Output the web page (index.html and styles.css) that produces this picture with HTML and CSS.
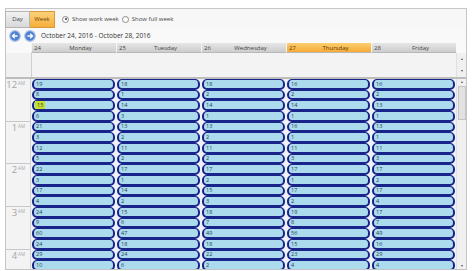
FILE: index.html
```html
<!DOCTYPE html>
<html lang='en'>
<head>
	<meta charset='UTF-8'>
	<title>Scheduler - Week</title>
	<link rel="stylesheet" href="styles.css">
</head>
<body>
	<div class='scheduler'>
		<div class='toolbar'>
			<div class='views'>
				<span class='view'>Day</span>
				<span class='view active'>Week</span>
			</div>
			<span class='radio'><span class='dot checked'></span>Show work week</span>
			<span class='radio'><span class='dot'></span>Show full week</span>
		</div>

		<div class='nav'>
			<svg class='arrow' width='12' height='12' viewBox='0 0 12 12'>
				<circle cx='6' cy='6' r='5.3' fill='#4f7fcf' stroke='#a9c3ea' stroke-width='1.2'/>
				<path d='M8.6 6H3.6M5.8 3.6L3.4 6l2.4 2.4' fill='none' stroke='#fff' stroke-width='1.3'/>
			</svg>
			<svg class='arrow' width='12' height='12' viewBox='0 0 12 12'>
				<circle cx='6' cy='6' r='5.3' fill='#4f7fcf' stroke='#a9c3ea' stroke-width='1.2'/>
				<path d='M3.4 6h5M6.2 3.6L8.6 6 6.2 8.4' fill='none' stroke='#fff' stroke-width='1.3'/>
			</svg>
			<span class='range'>October 24, 2016 - October 28, 2016</span>
		</div>

		<div class='head'>
			<div class='gutter'></div>
			<div class='days'>
				<div class='day'><span class='num'>24</span><span class='name'>Monday</span></div>
				<div class='day'><span class='num'>25</span><span class='name'>Tuesday</span></div>
				<div class='day'><span class='num'>26</span><span class='name'>Wednesday</span></div>
				<div class='day today'><span class='num'>27</span><span class='name'>Thursday</span></div>
				<div class='day'><span class='num'>28</span><span class='name'>Friday</span></div>
			</div>
			<div class='sb-gap'></div>
		</div>

		<div class='allday'>
			<div class='gutter'></div>
			<div class='allday-cells'></div>
			<div class='scrollbar mini'>
				<span class='tri up'></span>
				<span class='tri down'></span>
			</div>
		</div>

		<div class='body'>
			<div class='times'>
				<div class='hour'><span class='h'>12</span><span class='ampm'>AM</span></div>
				<div class='hour'><span class='h'>1</span><span class='ampm'>AM</span></div>
				<div class='hour'><span class='h'>2</span><span class='ampm'>AM</span></div>
				<div class='hour'><span class='h'>3</span><span class='ampm'>AM</span></div>
				<div class='hour'><span class='h'>4</span><span class='ampm'>AM</span></div>
			</div>
			<div class='cols'>
				<div class='col'>
					<div class='appt'>19</div><div class='appt'>8</div><div class='appt'><span class='mark'>15</span></div><div class='appt'>6</div>
					<div class='appt'>21</div><div class='appt'>3</div><div class='appt'>12</div><div class='appt'>5</div>
					<div class='appt'>22</div><div class='appt'>3</div><div class='appt'>17</div><div class='appt'>4</div>
					<div class='appt'>24</div><div class='appt'>9</div><div class='appt'>60</div><div class='appt'>24</div>
					<div class='appt'>29</div><div class='appt'>10</div>
				</div>
				<div class='col'>
					<div class='appt'>18</div><div class='appt'>1</div><div class='appt'>14</div><div class='appt'>3</div>
					<div class='appt'>13</div><div class='appt'>2</div><div class='appt'>11</div><div class='appt'>2</div>
					<div class='appt'>17</div><div class='appt'>1</div><div class='appt'>14</div><div class='appt'>2</div>
					<div class='appt'>15</div><div class='appt'>6</div><div class='appt'>47</div><div class='appt'>18</div>
					<div class='appt'>24</div><div class='appt'>6</div>
				</div>
				<div class='col'>
					<div class='appt'>18</div><div class='appt'>2</div><div class='appt'>14</div><div class='appt'>1</div>
					<div class='appt'>13</div><div class='appt'>2</div><div class='appt'>11</div><div class='appt'>2</div>
					<div class='appt'>17</div><div class='appt'>2</div><div class='appt'>15</div><div class='appt'>3</div>
					<div class='appt'>18</div><div class='appt'>7</div><div class='appt'>49</div><div class='appt'>18</div>
					<div class='appt'>22</div><div class='appt'>2</div>
				</div>
				<div class='col'>
					<div class='appt'>16</div><div class='appt'>2</div><div class='appt'>14</div><div class='appt'>1</div>
					<div class='appt'>16</div><div class='appt'>1</div><div class='appt'>11</div><div class='appt'>3</div>
					<div class='appt'>17</div><div class='appt'>1</div><div class='appt'>17</div><div class='appt'>2</div>
					<div class='appt'>19</div><div class='appt'>8</div><div class='appt'>56</div><div class='appt'>15</div>
					<div class='appt'>23</div><div class='appt'>4</div>
				</div>
				<div class='col'>
					<div class='appt'>16</div><div class='appt'>2</div><div class='appt'>13</div><div class='appt'>1</div>
					<div class='appt'>13</div><div class='appt'>1</div><div class='appt'>11</div><div class='appt'>3</div>
					<div class='appt'>17</div><div class='appt'>2</div><div class='appt'>17</div><div class='appt'>4</div>
					<div class='appt'>17</div><div class='appt'>7</div><div class='appt'>49</div><div class='appt'>16</div>
					<div class='appt'>29</div><div class='appt'>4</div>
				</div>
			</div>
			<div class='scrollbar'>
				<span class='tri up'></span>
				<span class='thumb'></span>
				<span class='track'></span>
				<span class='tri down'></span>
			</div>
		</div>
	</div>
</body>
</html>
```

FILE: styles.css
```css
html, body{
	margin:0;
	background-color:white;
	font-family:"Open Sans", "DejaVu Sans", sans-serif;
	color:#333;
}
.scheduler{
	display:flex;
	flex-direction:column;
	width:462px;
	margin:8px 0 0 5px;
	box-sizing:border-box;
	border:1px solid #c6c6c6;
	border-bottom:none;
	background-color:#f7f7f7;
}
.toolbar{
	display:flex;
	align-items:center;
	height:19px;
	box-sizing:border-box;
	padding-top:1px;
	font-size:6px;
}
.views{
	display:flex;
	height:17px;
	margin-left:-1px;
	margin-right:7px;
}
.view{
	display:flex;
	align-items:center;
	justify-content:center;
	width:25px;
	box-sizing:border-box;
	border:1px solid #b4b4b4;
	background:linear-gradient(#f2f2f2, #d8d8d8);
	color:#444;
}
.view + .view{
	border-left:none;
}
.view.active{
	background:linear-gradient(#fdd27a, #f6ae38);
	border-color:#d49a3a;
	color:#6a4a10;
}
.radio{
	display:flex;
	align-items:center;
	margin-right:3px;
	color:#444;
}
.dot{
	width:5px;
	height:5px;
	margin-right:3px;
	border:1px solid #8a8a8a;
	border-radius:50%;
	background-color:white;
	box-sizing:content-box;
	position:relative;
}
.dot.checked::after{
	content:'';
	position:absolute;
	left:1.5px;
	top:1.5px;
	width:2px;
	height:2px;
	border-radius:50%;
	background-color:#333;
}
.nav{
	display:flex;
	align-items:center;
	height:15px;
	padding-left:2px;
	font-size:6.5px;
	background-color:#f9f9f9;
}
.arrow{
	margin-left:1px;
	margin-right:2px;
}
.range{
	margin-left:3px;
	color:#333;
}
.head{
	display:flex;
	height:10px;
	background-color:#f9f9f9;
}
.gutter{
	width:25px;
	flex:none;
}
.days{
	flex:1 1 auto;
	display:flex;
}
.day{
	flex:1 1 0;
	display:flex;
	align-items:center;
	font-size:6px;
	color:#444;
	background:linear-gradient(#e6e6e6, #cdcdcd);
	border-left:1px solid #f4f4f4;
	border-bottom:1px solid #b8b8b8;
}
.day.today{
	background:linear-gradient(#fdcf70, #f7aa34);
	color:#5a3a08;
}
.day .num{
	width:11px;
	padding-left:2px;
}
.day .name{
	flex:1 1 auto;
	text-align:center;
}
.sb-gap{
	width:10px;
	flex:none;
}
.allday{
	display:flex;
	height:24px;
	border-bottom:2px solid #bdbdbd;
	background-color:#f1f1f1;
}
.allday .gutter{
	border-right:1px solid #cfcfcf;
}
.allday-cells{
	flex:1 1 auto;
	background-color:#f3f3f3;
}
.scrollbar{
	display:flex;
	flex-direction:column;
	align-items:center;
	width:10px;
	flex:none;
	background-color:#f0f0f0;
	border-left:1px solid #e0e0e0;
	box-sizing:border-box;
}
.scrollbar.mini{
	justify-content:space-between;
	padding:3px 0;
}
.tri{
	width:0;
	height:0;
	border-left:1.5px solid transparent;
	border-right:1.5px solid transparent;
}
.tri.up{
	border-bottom:2px solid #555;
	margin-top:2px;
}
.tri.down{
	border-top:2px solid #555;
	margin-bottom:2px;
}
.body{
	display:flex;
	height:190px;
	overflow:hidden;
	border-bottom:1px solid #c6c6c6;
}
.times{
	width:25px;
	flex:none;
	background-color:#f3f3f3;
	border-right:1px solid #d4d4d4;
	box-sizing:border-box;
}
.hour{
	display:flex;
	justify-content:flex-end;
	height:42.67px;
	box-sizing:border-box;
	padding:1px 5px 0 0;
	border-bottom:1px solid #c8c8c8;
	color:#a6a6a6;
}
.hour .h{
	font-size:9.5px;
	line-height:10px;
}
.hour .ampm{
	font-size:4.5px;
	line-height:6px;
	margin-left:1px;
}
.cols{
	flex:1 1 auto;
	display:flex;
}
.col{
	flex:1 1 0;
	min-width:0;
	background-color:#eef0fa;
}
.appt{
	display:flex;
	align-items:center;
	height:10.67px;
	margin:0 1px;
	box-sizing:border-box;
	padding-left:2px;
	border:2px solid #18248a;
	border-top-width:1.5px;
	border-bottom-width:2px;
	border-radius:5px;
	background-color:#acdbee;
	font-size:5.5px;
	color:#2c3e50;
}
.mark{
	align-self:stretch;
	display:flex;
	align-items:center;
	padding:0 2px;
	margin-left:-1px;
	background-color:#c8e02a;
}
.scrollbar .thumb{
	width:6px;
	height:32px;
	margin-top:3px;
	border:1px solid #c4c4c4;
	background-color:#e2e2e2;
}
.scrollbar .track{
	flex:1 1 auto;
}
```
